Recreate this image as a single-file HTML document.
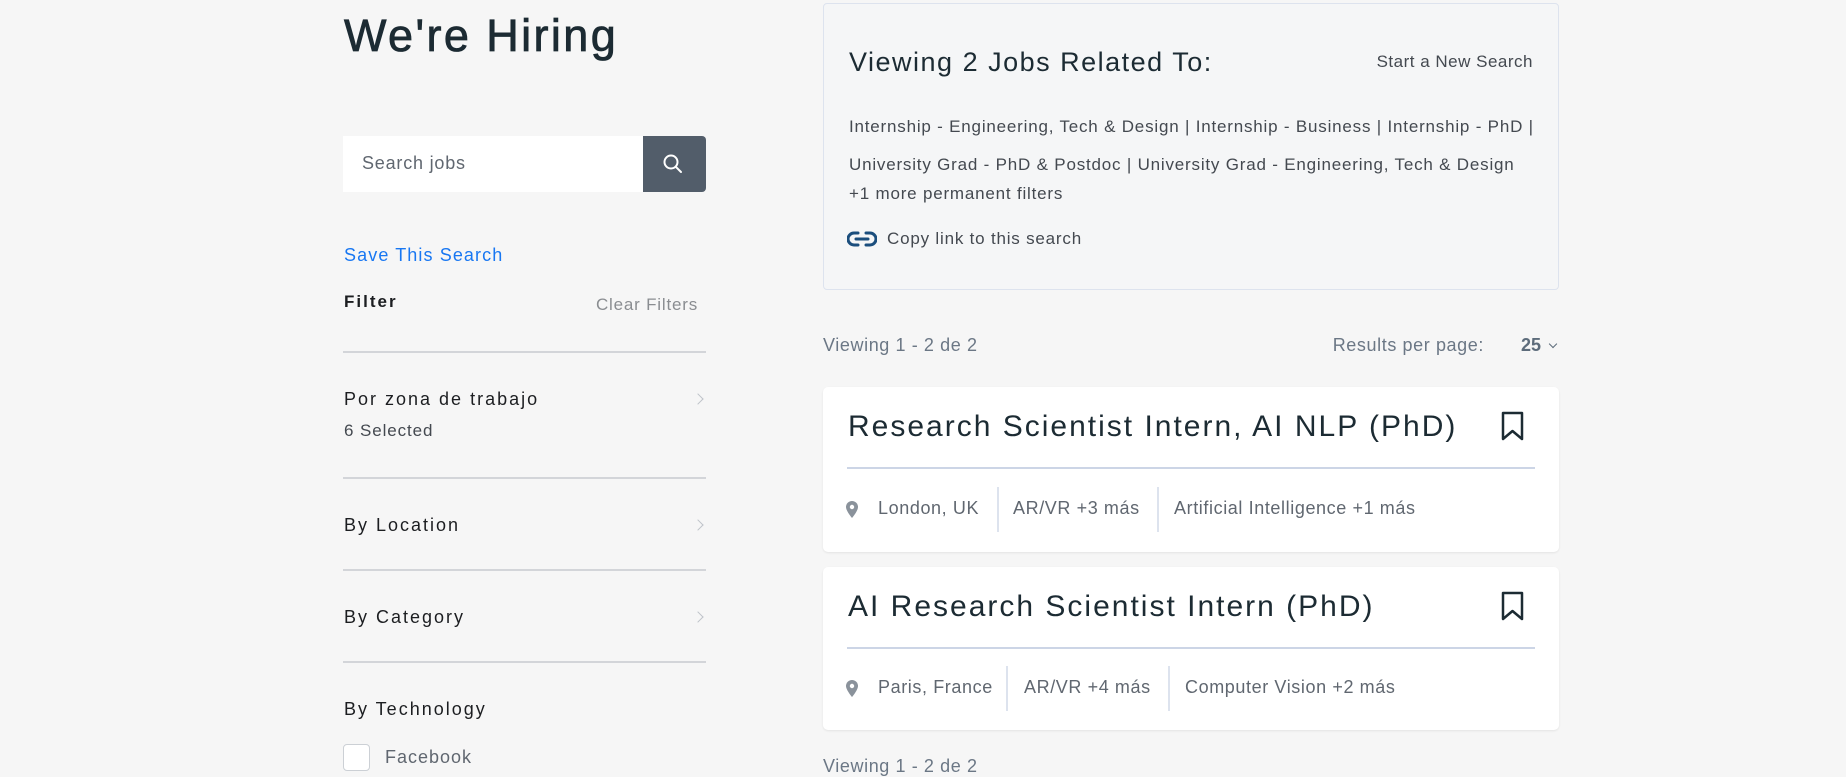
<!DOCTYPE html>
<html><head><meta charset="utf-8"><style>
*{margin:0;padding:0;box-sizing:border-box}
body{width:1846px;height:760px;overflow:hidden;background:#f6f6f6;font-family:"Liberation Sans",sans-serif;position:relative;color:#1c1e21}
.a{position:absolute;white-space:nowrap}
.hr{position:absolute;left:343px;width:363px;height:2px;background:#d3d5d9}
.chev{position:absolute;left:694px;width:8px;height:8px;border-top:1.5px solid #bec3c9;border-right:1.5px solid #bec3c9;transform:rotate(45deg)}
.lab{font-size:18px;letter-spacing:2px;color:#1c1e21}
.card{position:absolute;left:823px;width:736px;background:#fff;border-radius:5px;box-shadow:0 1px 2px rgba(0,0,0,.08)}
.meta{font-size:18px;color:#606770;letter-spacing:.6px}
.sep{position:absolute;width:2px;height:45px;background:#dde3ee}
.ft{font-size:17px;color:#444950;letter-spacing:.8px}
</style></head><body>
<div class="a" style="left:344px;top:8px;font-size:45px;letter-spacing:2.4px;color:#1c2b33;line-height:56px;-webkit-text-stroke:0.8px #1c2b33">We're Hiring</div>

<div class="a" style="left:343px;top:136px;width:300px;height:56px;background:#fff"></div>
<div class="a" style="left:362px;top:153px;font-size:18px;color:#606770;letter-spacing:.8px">Search jobs</div>
<div class="a" style="left:643px;top:136px;width:63px;height:56px;background:#525d6a;border-radius:0 4px 4px 0"></div>
<svg class="a" style="left:660px;top:151px" width="26" height="26" viewBox="0 0 26 26"><circle cx="11" cy="11" r="6.5" fill="none" stroke="#fff" stroke-width="2"/><line x1="15.8" y1="15.8" x2="21" y2="21" stroke="#fff" stroke-width="2" stroke-linecap="round"/></svg>

<div class="a" style="left:344px;top:245px;font-size:18px;color:#1877f2;letter-spacing:1.1px">Save This Search</div>
<div class="a" style="left:344px;top:292px;font-size:17px;font-weight:bold;letter-spacing:2px">Filter</div>
<div class="a" style="left:591px;top:295px;font-size:17px;color:#8a8d91;letter-spacing:.8px;width:107px;text-align:right">Clear Filters</div>
<div class="hr" style="top:351px"></div>
<div class="a lab" style="top:389px;left:344px">Por zona de trabajo</div>
<div class="chev" style="top:395px"></div>
<div class="a" style="left:344px;top:421px;font-size:17px;color:#444950;letter-spacing:.9px">6 Selected</div>
<div class="hr" style="top:477px"></div>
<div class="a lab" style="top:515px;left:344px">By Location</div>
<div class="chev" style="top:521px"></div>
<div class="hr" style="top:569px"></div>
<div class="a lab" style="top:607px;left:344px">By Category</div>
<div class="chev" style="top:613px"></div>
<div class="hr" style="top:661px"></div>
<div class="a lab" style="top:699px;left:344px">By Technology</div>
<div class="a" style="left:343px;top:744px;width:27px;height:27px;background:#fff;border:1px solid #ccd0d5;border-radius:4px"></div>
<div class="a" style="left:385px;top:747px;font-size:18px;color:#606770;letter-spacing:1px">Facebook</div>

<div class="a" style="left:823px;top:3px;width:736px;height:287px;border:1px solid #dde3ee;border-radius:4px;background:#f5f6f7"></div>
<div class="a" style="left:849px;top:47px;font-size:27px;letter-spacing:1.5px;color:#1c2b33">Viewing 2 Jobs Related To:</div>
<div class="a" style="left:1300px;top:52px;width:233px;text-align:right;font-size:17px;color:#444950;letter-spacing:.5px">Start a New Search</div>
<div class="a ft" style="left:849px;top:117px">Internship - Engineering, Tech &amp; Design | Internship - Business | Internship - PhD |</div>
<div class="a ft" style="left:849px;top:155px">University Grad - PhD &amp; Postdoc | University Grad - Engineering, Tech &amp; Design</div>
<div class="a ft" style="left:849px;top:184px">+1 more permanent filters</div>
<svg class="a" style="left:847px;top:230px" width="30" height="18" viewBox="0 0 30 18"><path d="M11 3H7a6 6 0 0 0 0 12h4M19 3h4a6 6 0 0 1 0 12h-4M9 9h12" fill="none" stroke="#1b4e7d" stroke-width="3" stroke-linecap="round"/></svg>
<div class="a ft" style="left:887px;top:229px">Copy link to this search</div>

<div class="a" style="left:823px;top:335px;font-size:18px;color:#6b7785;letter-spacing:.6px">Viewing 1 - 2 de 2</div>
<div class="a" style="left:1300px;top:335px;width:184px;text-align:right;font-size:18px;color:#6b7785;letter-spacing:.6px">Results per page:</div>
<div class="a" style="left:1521px;top:335px;font-size:18px;font-weight:bold;color:#5d6c7b">25</div>
<div class="a" style="left:1550px;top:341px;width:6px;height:6px;border-right:1.3px solid #5d6c7b;border-bottom:1.3px solid #5d6c7b;transform:rotate(45deg)"></div>

<div class="card" style="top:387px;height:165px"></div>
<div class="a" style="left:848px;top:410px;font-size:30px;letter-spacing:2px;color:#1c2b33">Research Scientist Intern, AI NLP (PhD)</div>
<svg class="a" style="left:1501px;top:411px" width="24" height="31" viewBox="0 0 24 31"><path d="M2 2h19v26l-9.5-8L2 28z" fill="none" stroke="#1c2b33" stroke-width="2.5" stroke-linejoin="round"/></svg>
<div class="a" style="left:847px;top:467px;width:688px;height:2px;background:#ccd5e6"></div>
<svg class="a" style="left:846px;top:501px" width="12" height="18" viewBox="0 0 12 18"><path d="M6 0a6 6 0 0 0-6 6c0 4 6 11 6 11s6-7 6-11a6 6 0 0 0-6-6z" fill="#8a929b"/><circle cx="6" cy="6" r="2.2" fill="#fff"/></svg>
<div class="a meta" style="left:878px;top:498px">London, UK</div>
<div class="sep" style="left:997px;top:487px"></div>
<div class="a meta" style="left:1013px;top:498px">AR/VR +3 más</div>
<div class="sep" style="left:1157px;top:487px"></div>
<div class="a meta" style="left:1174px;top:498px">Artificial Intelligence +1 más</div>

<div class="card" style="top:567px;height:163px"></div>
<div class="a" style="left:848px;top:590px;font-size:30px;letter-spacing:2px;color:#1c2b33">AI Research Scientist Intern (PhD)</div>
<svg class="a" style="left:1501px;top:591px" width="24" height="31" viewBox="0 0 24 31"><path d="M2 2h19v26l-9.5-8L2 28z" fill="none" stroke="#1c2b33" stroke-width="2.5" stroke-linejoin="round"/></svg>
<div class="a" style="left:847px;top:647px;width:688px;height:2px;background:#ccd5e6"></div>
<svg class="a" style="left:846px;top:680px" width="12" height="18" viewBox="0 0 12 18"><path d="M6 0a6 6 0 0 0-6 6c0 4 6 11 6 11s6-7 6-11a6 6 0 0 0-6-6z" fill="#8a929b"/><circle cx="6" cy="6" r="2.2" fill="#fff"/></svg>
<div class="a meta" style="left:878px;top:677px">Paris, France</div>
<div class="sep" style="left:1006px;top:666px"></div>
<div class="a meta" style="left:1024px;top:677px">AR/VR +4 más</div>
<div class="sep" style="left:1168px;top:666px"></div>
<div class="a meta" style="left:1185px;top:677px">Computer Vision +2 más</div>

<div class="a" style="left:823px;top:756px;font-size:18px;color:#6b7785;letter-spacing:.6px">Viewing 1 - 2 de 2</div>
</body></html>
